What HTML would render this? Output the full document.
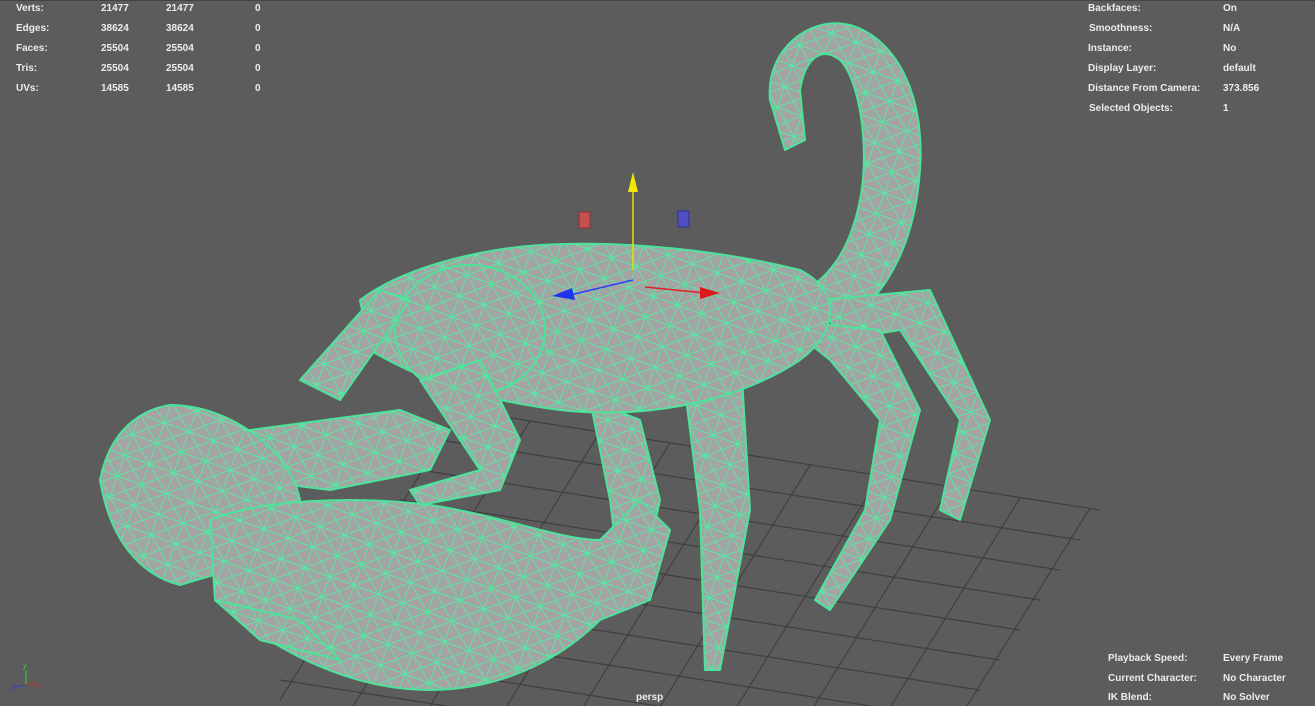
<!DOCTYPE html>
<html><head><style>
html,body{margin:0;padding:0;width:1315px;height:706px;overflow:hidden;background:#5c5c5c;position:relative}
.t{position:absolute;font:bold 10px/12px "Liberation Sans",sans-serif;color:#ececec;white-space:nowrap}
</style></head><body>
<svg width="1315" height="706" style="position:absolute;left:0;top:0">
<defs>
<pattern id="m" width="26" height="22" patternUnits="userSpaceOnUse" patternTransform="rotate(20)">
<rect width="26" height="22" fill="#a4a4a4"/>
<path d="M0 0L26 22M26 0L0 22M0 11H26M13 0V22" stroke="#55eaa2" stroke-width="0.9"/>
</pattern>
</defs>
<rect width="1315" height="706" fill="#5c5c5c"/>
<rect x="0" y="0" width="1315" height="1" fill="#444"/>
<g stroke="#3f3f3f" stroke-width="1.2" fill="none">
<path d="M440 440L1080 540M420 470L1060 570M400 500L1040 600M380 530L1020 630M360 560L1000 660M340 590L980 690M320 620L960 720M300 650L940 750M280 680L920 780M460 410L1100 510"/>
<path d="M460 410L280 700M530 421L350 711M600 432L420 722M670 443L490 733M740 454L560 744M810 465L630 755M880 476L700 766M950 487L770 777M1020 498L840 788M1090 508L910 798"/>
</g>
<g stroke="#4de39a" stroke-width="2" fill="url(#m)" stroke-linejoin="round">
<path d="M790 300C830 280 850 250 860 200C870 150 860 80 840 60C820 45 805 60 800 90L805 140L785 150L770 100C765 50 810 15 850 25C900 40 925 100 920 170C915 240 890 290 850 320Z"/>
<path d="M820 300L930 290L990 420L960 520L940 510L960 420L900 330L840 340Z"/>
<path d="M780 320L880 330L920 410L890 520L830 610L815 600L865 510L880 420L830 360Z"/>
<path d="M680 350L740 345L750 510L720 670L705 670L700 510Z"/>
<path d="M590 400L640 420L660 500L640 590L620 580L610 500Z"/>
<path d="M360 300C400 270 470 250 540 245C620 240 720 250 800 270C840 290 840 330 800 360C740 400 650 420 560 410C480 400 420 380 370 350Z"/>
<ellipse cx="470" cy="330" rx="75" ry="65"/>
<path d="M300 380L380 290L410 300L340 400Z"/>
<path d="M420 380L480 360L520 440L500 490L420 505L410 490L480 470Z"/>
<path d="M250 430L400 410L450 430L430 470L330 490L250 480Z"/>
<path d="M100 480C110 430 140 410 170 405C230 405 290 450 300 500L280 560L230 570L180 585C140 575 110 540 100 480Z"/>
<path d="M210 520C260 500 350 495 430 505C500 515 560 540 600 540L640 500L670 530L650 600L600 620C560 660 500 690 430 690C340 690 260 640 215 600Z"/>
<path d="M215 600L300 620L340 660L260 640Z"/>
</g>
<line x1="633" y1="270" x2="633" y2="190" stroke="#e8e000" stroke-width="1.5"/>
<polygon points="628,192 638,192 633,172" fill="#f0e800"/>
<line x1="633" y1="280" x2="570" y2="295" stroke="#2a3cff" stroke-width="1.5"/>
<polygon points="572,288 575,300 552,296" fill="#2233ee"/>
<line x1="645" y1="287" x2="705" y2="293" stroke="#dd2222" stroke-width="1.5"/>
<polygon points="700,287 700,299 720,293" fill="#dd1a1a"/>
<rect x="579" y="212" width="11" height="16" fill="#c45050" stroke="#903030"/>
<rect x="678" y="211" width="11" height="16" fill="#5050c4" stroke="#303090"/>
<line x1="26" y1="685" x2="26" y2="670" stroke="#40d040"/>
<line x1="26" y1="685" x2="36" y2="683" stroke="#d03030"/>
<line x1="26" y1="685" x2="16" y2="687" stroke="#3040d0"/>
<text x="23" y="668" fill="#40d040" font-size="8" font-family="Liberation Sans">y</text>
<text x="36" y="688" fill="#d03030" font-size="8" font-family="Liberation Sans">x</text>
<text x="12" y="690" fill="#3040d0" font-size="8" font-family="Liberation Sans">z</text>
</svg>
<div class="t" style="left:16px;top:3px">Verts:</div><div class="t" style="left:101px;top:3px">21477</div><div class="t" style="left:166px;top:3px">21477</div><div class="t" style="left:255px;top:3px">0</div>
<div class="t" style="left:16px;top:23px">Edges:</div><div class="t" style="left:101px;top:23px">38624</div><div class="t" style="left:166px;top:23px">38624</div><div class="t" style="left:255px;top:23px">0</div>
<div class="t" style="left:16px;top:43px">Faces:</div><div class="t" style="left:101px;top:43px">25504</div><div class="t" style="left:166px;top:43px">25504</div><div class="t" style="left:255px;top:43px">0</div>
<div class="t" style="left:16px;top:63px">Tris:</div><div class="t" style="left:101px;top:63px">25504</div><div class="t" style="left:166px;top:63px">25504</div><div class="t" style="left:255px;top:63px">0</div>
<div class="t" style="left:16px;top:83px">UVs:</div><div class="t" style="left:101px;top:83px">14585</div><div class="t" style="left:166px;top:83px">14585</div><div class="t" style="left:255px;top:83px">0</div>
<div class="t" style="left:1088px;top:3px">Backfaces:</div><div class="t" style="left:1223px;top:3px">On</div>
<div class="t" style="left:1089px;top:23px">Smoothness:</div><div class="t" style="left:1223px;top:23px">N/A</div>
<div class="t" style="left:1088px;top:43px">Instance:</div><div class="t" style="left:1223px;top:43px">No</div>
<div class="t" style="left:1088px;top:63px">Display Layer:</div><div class="t" style="left:1223px;top:63px">default</div>
<div class="t" style="left:1088px;top:83px">Distance From Camera:</div><div class="t" style="left:1223px;top:83px">373.856</div>
<div class="t" style="left:1089px;top:103px">Selected Objects:</div><div class="t" style="left:1223px;top:103px">1</div>
<div class="t" style="left:1108px;top:653px">Playback Speed:</div><div class="t" style="left:1223px;top:653px">Every Frame</div>
<div class="t" style="left:1108px;top:673px">Current Character:</div><div class="t" style="left:1223px;top:673px">No Character</div>
<div class="t" style="left:1108px;top:692px">IK Blend:</div><div class="t" style="left:1223px;top:692px">No Solver</div>
<div class="t" style="left:636px;top:692px">persp</div>
</body></html>
